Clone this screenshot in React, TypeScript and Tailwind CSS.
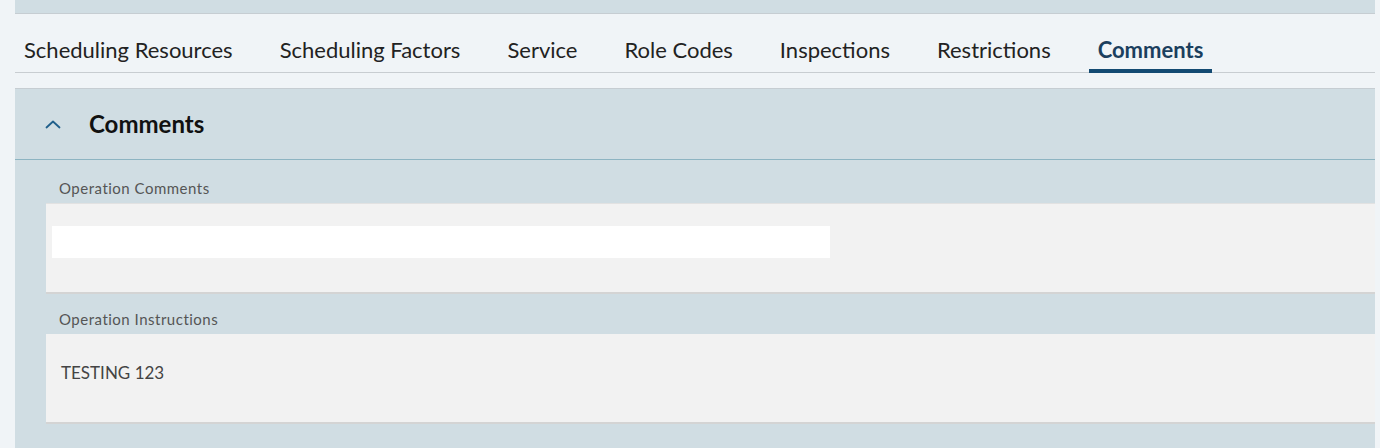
import React from 'react';

const tabs = [
  'Scheduling Resources',
  'Scheduling Factors',
  'Service',
  'Role Codes',
  'Inspections',
  'Restrictions',
  'Comments',
];

function ChevronUp() {
  return (
    <svg width="16" height="10" viewBox="0 0 16 10" fill="none">
      <polyline points="1.5,8.5 8,2.5 14.5,8.5" stroke="#1f5f8b" strokeWidth="1.8" strokeLinecap="round" strokeLinejoin="round" />
    </svg>
  );
}

export default function App() {
  const active = 'Comments';

  return (
    <div className="h-[448px] w-full overflow-hidden bg-[#f0f4f7] pl-[15px] pr-[5px] font-['Lato','Liberation_Sans',sans-serif]">
      {/* top strip of the panel above */}
      <div className="h-[14px] border-b border-[#c6cdd2] bg-[#d0dde3]" />

      {/* tab bar */}
      <div className="flex h-[59px] items-stretch gap-[29px] border-b border-[#c8cdd1]">
        {tabs.map((t) => (
          <div
            key={t}
            className={
              t === active
                ? '-mb-px flex items-center border-b-4 border-[#134a72] px-[9px] pt-[16px] text-[22px] font-bold text-[#1b3f5e]'
                : '-mb-px flex items-center border-b-4 border-transparent px-[9px] pt-[16px] text-[22px] text-[#222]'
            }
          >
            {t}
          </div>
        ))}
      </div>

      {/* comments panel */}
      <div className="mt-[15px] border-t border-[#c6cdd2] bg-[#d0dde3] pb-[40px]">
        <div className="flex h-[71px] items-center border-b border-[#8db4c2]">
          <div className="ml-[29px] flex w-[18px] justify-center">
            <ChevronUp />
          </div>
          <h2 className="ml-[27px] text-[24px] font-bold text-[#111]">Comments</h2>
        </div>

        <div className="pl-[31px]">
          <div className="pl-[13px] pt-[18px] pb-[5px] text-[15px] leading-[20px] tracking-[0.5px] text-[#555]">
            Operation Comments
          </div>
          <div className="h-[91px] border-t border-[#e2e2e2] border-b-2 border-b-[#d4d4d4] bg-[#f2f2f2] pl-[6px] pt-[22px]">
            <div className="h-[32px] w-[778px] bg-white" />
          </div>

          <div className="pl-[13px] pt-[15px] pb-[5px] text-[15px] leading-[20px] tracking-[0.5px] text-[#555]">
            Operation Instructions
          </div>
          <div className="flex h-[90px] items-start border-b-2 border-[#d4d4d4] bg-[#f2f2f2] pl-[15px] pt-[28px]">
            <span className="text-[17px] leading-[22px] text-[#444]">TESTING 123</span>
          </div>
        </div>
      </div>
    </div>
  );
}
